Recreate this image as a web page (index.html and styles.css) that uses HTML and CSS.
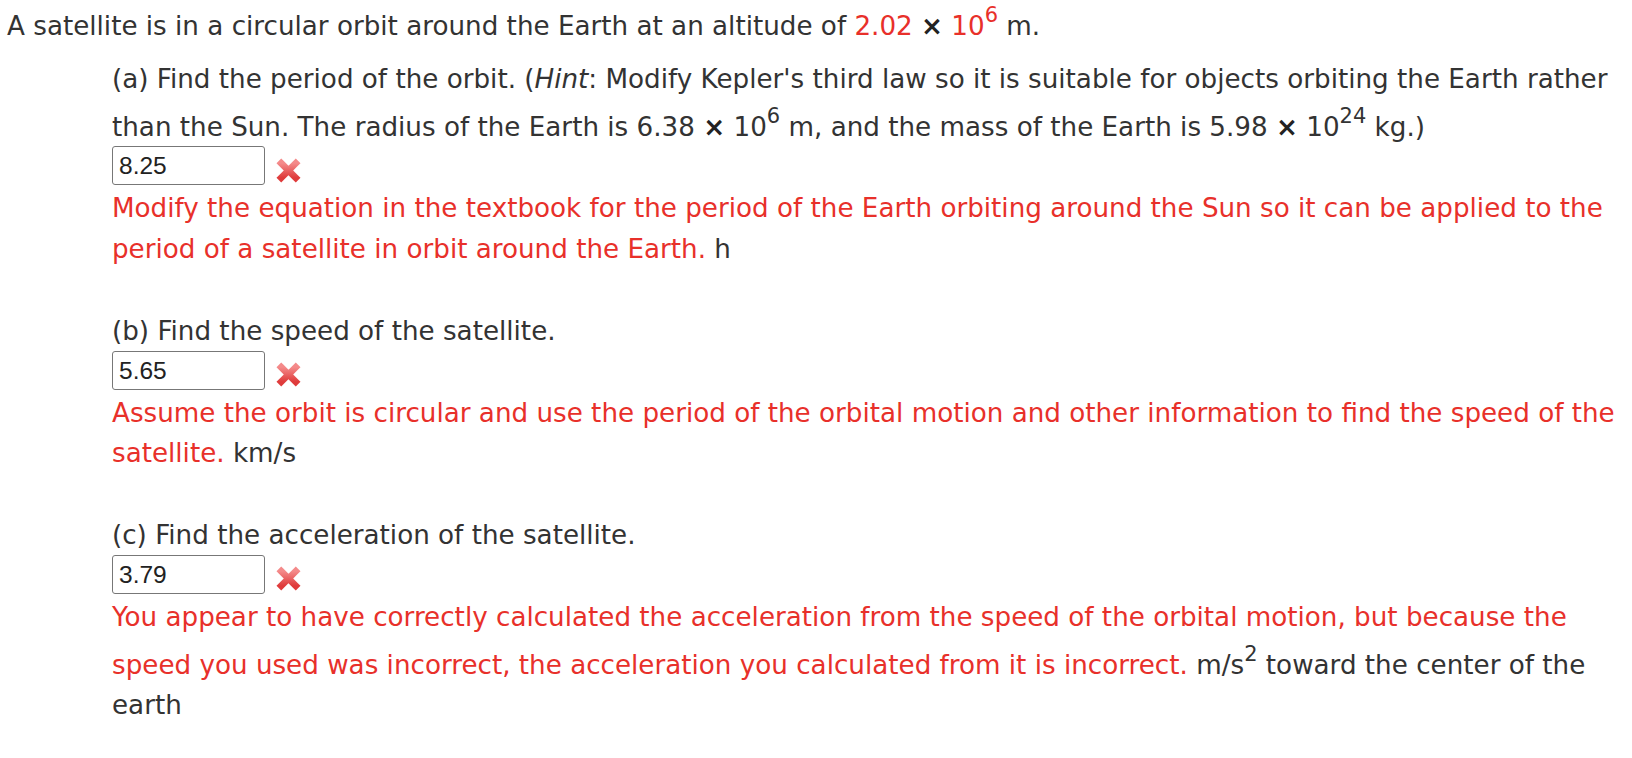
FILE: index.html
```
<!DOCTYPE html>
<html>
<head>
<meta charset="utf-8">
<link rel="stylesheet" href="styles.css">
</head>
<body>
<svg class="defs" width="0" height="0" aria-hidden="true"><defs><linearGradient id="xg" x1="0" y1="0" x2="0" y2="1"><stop offset="0" stop-color="#f48a8a"/><stop offset="1" stop-color="#df3b3b"/></linearGradient></defs></svg>
<p class="intro">A satellite is in a circular orbit around the Earth at an altitude of <span class="red">2.02</span> <span class="times">&times;</span> <span class="red">10<sup>6</sup></span> m.</p>
<div class="parts">
  <div class="part">
    <p class="q">(a) Find the period of the orbit. (<i>Hint</i>: Modify Kepler's third law so it is suitable for objects orbiting the Earth rather than the Sun. The radius of the Earth is 6.38 <span class="times">&times;</span> 10<sup>6</sup> m, and the mass of the Earth is 5.98 <span class="times">&times;</span> 10<sup>24</sup> kg.)</p>
    <div class="answer">
      <div class="box">8.25</div>
      <svg class="xmark" viewBox="0 0 24 24" width="25" height="25"><path d="M5 5 L19 19 M19 5 L5 19" stroke="url(#xg)" stroke-width="6.4" stroke-linecap="square" fill="none"/></svg>
    </div>
    <p class="fb"><span class="red">Modify the equation in the textbook for the period of the Earth orbiting around the Sun so it can be applied to the period of a satellite in orbit around the Earth.</span> h</p>
  </div>
  <div class="part">
    <p class="q">(b) Find the speed of the satellite.</p>
    <div class="answer">
      <div class="box">5.65</div>
      <svg class="xmark" viewBox="0 0 24 24" width="25" height="25"><path d="M5 5 L19 19 M19 5 L5 19" stroke="url(#xg)" stroke-width="6.4" stroke-linecap="square" fill="none"/></svg>
    </div>
    <p class="fb"><span class="red">Assume the orbit is circular and use the period of the orbital motion and other information to find the speed of the satellite.</span> km/s</p>
  </div>
  <div class="part">
    <p class="q">(c) Find the acceleration of the satellite.</p>
    <div class="answer">
      <div class="box">3.79</div>
      <svg class="xmark" viewBox="0 0 24 24" width="25" height="25"><path d="M5 5 L19 19 M19 5 L5 19" stroke="url(#xg)" stroke-width="6.4" stroke-linecap="square" fill="none"/></svg>
    </div>
    <p class="fb"><span class="red">You appear to have correctly calculated the acceleration from the speed of the orbital motion, but because the speed you used was incorrect, the acceleration you calculated from it is incorrect.</span> m/s<sup>2</sup> toward the center of the earth</p>
  </div>
</div>
</body>
</html>
```
FILE: styles.css
```
html, body {
  margin: 0;
  padding: 0;
  background: #fff;
}
body {
  padding: 0 8px 0 7px;
  font-family: "DejaVu Sans", Verdana, sans-serif;
  font-size: 26.2px;
  line-height: 40.8px;
  color: #333;
}
.defs { position: absolute; }
p { margin: 0; }
.red { color: #e8302a; }
.times { font-weight: bold; color: #222; }
sup {
  font-size: 0.8em;
  line-height: 33px;
  vertical-align: 13px;
}
.intro {
  margin-top: -1px;
  margin-bottom: 12px;
}
.parts {
  margin-left: 105px;
}
.part { margin-bottom: 40.8px; }
.answer {
  display: flex;
  align-items: center;
  gap: 11px;
  margin-top: -1px;
  margin-bottom: 3px;
}
.box {
  width: 145px;
  height: 37px;
  border: 1.5px solid #777;
  border-radius: 3px;
  padding: 0 0 0 6px;
  font-family: "Liberation Sans", Arial, sans-serif;
  font-size: 24.5px;
  line-height: 37px;
  color: #222;
}
.xmark {
  display: block;
  margin-top: 9px;
}
```
